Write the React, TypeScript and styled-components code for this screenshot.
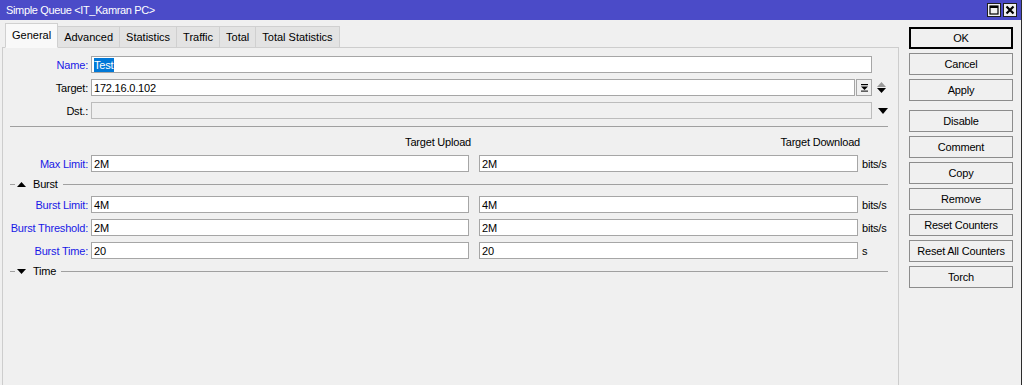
import React from 'react';
import styled, { createGlobalStyle } from 'styled-components';

const GlobalStyle = createGlobalStyle`
  html, body {
    margin: 0;
    padding: 0;
  }
  body {
    font-family: 'Liberation Sans', Arial, sans-serif;
    font-size: 11px;
    letter-spacing: -0.2px;
    color: #000;
    background: #fdfdfd;
  }
`;

const BLUE = '#1818e6';

const Screen = styled.div`
  display: flex;
  width: 1024px;
  height: 385px;
  overflow: hidden;
  background: #fdfdfd;
`;

const Window = styled.div`
  display: flex;
  flex-direction: column;
  width: 1021px;
  height: 100%;
  flex-shrink: 0;
  background: #f0f0f0;
  border-right: 1px solid #2b2b2b;
`;

const TitleBar = styled.div`
  display: flex;
  align-items: center;
  justify-content: space-between;
  height: 20px;
  padding: 0 4px 0 6px;
  background: #4b4bc8;
  color: #fff;
  font-size: 11px;
  letter-spacing: -0.35px;
`;

const TitleButtons = styled.div`
  display: flex;
  gap: 2px;
`;

const TitleBtn = styled.div`
  display: flex;
  align-items: center;
  justify-content: center;
  box-sizing: border-box;
  width: 14px;
  height: 14px;
  border: 1px solid #1e1e1e;
  background: #f0f0f0;
`;

const Body = styled.div`
  display: flex;
  flex: 1;
  min-height: 0;
`;

const Main = styled.div`
  display: flex;
  flex-direction: column;
  width: 899px;
  box-sizing: border-box;
  padding: 3px 0 0 2px;
`;

const Tabs = styled.div`
  display: flex;
  align-items: flex-end;
  padding-left: 3px;
  margin-bottom: -1px;
`;

const Tab = styled.div<{ $active?: boolean }>`
  position: relative;
  z-index: ${(p) => (p.$active ? 1 : 0)};
  display: flex;
  align-items: center;
  justify-content: center;
  box-sizing: border-box;
  height: ${(p) => (p.$active ? 25 : 22)}px;
  padding: ${(p) => (p.$active ? '0 6px 2px' : '0 6px')};
  margin-right: -1px;
  letter-spacing: 0;
  background: ${(p) => (p.$active ? '#f9f9f9' : '#e3e3e3')};
  border: 1px solid #d0d0d0;
  border-bottom: ${(p) => (p.$active ? '1px solid #f9f9f9' : '1px solid #d0d0d0')};
`;

const Panel = styled.div`
  flex: 1;
  border: 1px solid #cdcdcd;
  border-bottom: none;
  background: #f0f0f0;
`;

const Form = styled.div`
  display: flex;
  flex-direction: column;
  padding: 8px 0 0 0;
`;

const Row = styled.div`
  display: flex;
  align-items: center;
  height: 17px;
  margin-bottom: 6px;
`;

const Label = styled.div<{ $blue?: boolean }>`
  width: 85px;
  margin-right: 3px;
  text-align: right;
  white-space: nowrap;
  color: ${(p) => (p.$blue ? BLUE : '#000')};
`;

const Field = styled.div<{ $w: number; $disabled?: boolean }>`
  display: flex;
  align-items: center;
  box-sizing: border-box;
  width: ${(p) => p.$w}px;
  height: 17px;
  padding: 0 2px;
  border: 1px solid ${(p) => (p.$disabled ? '#bcbcbc' : '#a6a6a6')};
  background: ${(p) => (p.$disabled ? '#f0f0f0' : '#fff')};
  white-space: nowrap;
  overflow: hidden;
`;

const Selected = styled.span`
  background: #0078d7;
  color: #fff;
  padding: 1px 1px 1px 0;
`;

const Tail = styled.div<{ $w?: number; $ml?: number }>`
  display: flex;
  align-items: center;
  justify-content: flex-end;
  width: ${(p) => p.$w ?? 16}px;
  margin-left: ${(p) => p.$ml ?? 0}px;
`;

const DropBtn = styled.div`
  display: flex;
  align-items: center;
  justify-content: center;
  box-sizing: border-box;
  width: 16px;
  height: 17px;
  margin-left: 1px;
  border: 1px solid #a6a6a6;
  background: #f0f0f0;
`;

const Spinner = styled.div`
  display: flex;
  flex-direction: column;
  gap: 1px;
  margin-left: 5px;
`;

const Separator = styled.div`
  width: 878px;
  height: 1px;
  margin: 1px 0 0 7px;
  background: #a0a0a0;
`;

const HeaderRow = styled.div`
  display: flex;
  align-items: flex-end;
  height: 22px;
  margin-bottom: 6px;
`;

const HeadCell = styled.div<{ $w: number; $ml?: number }>`
  width: ${(p) => p.$w}px;
  margin-left: ${(p) => p.$ml ?? 0}px;
  text-align: right;
  line-height: 13px;
`;

const Unit = styled.div`
  width: 26px;
  margin-left: 4px;
  white-space: nowrap;
`;

const GroupHead = styled.div`
  display: flex;
  align-items: center;
  width: 878px;
  height: 12px;
  margin: 0 0 6px 7px;
`;

const Dash = styled.div<{ $grow?: boolean }>`
  height: 1px;
  background: #a0a0a0;
  width: 5px;
  flex: ${(p) => (p.$grow ? 1 : 'none')};
`;

const Arrow = styled.span`
  display: flex;
  margin-left: 2px;
`;

const GroupTitle = styled.div`
  margin: 0 5px 0 7px;
`;

const Side = styled.div`
  display: flex;
  flex-direction: column;
  gap: 4px;
  padding: 7px 0 0 10px;
`;

const Button = styled.div<{ $default?: boolean; $gapTop?: boolean }>`
  display: flex;
  align-items: center;
  justify-content: center;
  box-sizing: border-box;
  width: 104px;
  height: 22px;
  margin-top: ${(p) => (p.$gapTop ? 5 : 0)}px;
  border: 1px solid ${(p) => (p.$default ? '#000' : '#8c8c8c')};
  box-shadow: ${(p) => (p.$default ? 'inset 0 0 0 1px #000' : 'none')};
  background: #f0f0f0;
`;

const Edge = styled.div`
  flex: 1;
  background: #fdfdfd;
`;

const Triangle = ({ up, color = '#000' }: { up?: boolean; color?: string }) => (
  <svg width="9" height="5" viewBox="0 0 9 5">
    <polygon points={up ? '0,5 9,5 4.5,0' : '0,0 9,0 4.5,5'} fill={color} />
  </svg>
);

const tabs = ['General', 'Advanced', 'Statistics', 'Traffic', 'Total', 'Total Statistics'];

const buttons = [
  'OK',
  'Cancel',
  'Apply',
  'Disable',
  'Comment',
  'Copy',
  'Remove',
  'Reset Counters',
  'Reset All Counters',
  'Torch',
];

const burstRows = [
  { label: 'Burst Limit:', up: '4M', down: '4M', unit: 'bits/s' },
  { label: 'Burst Threshold:', up: '2M', down: '2M', unit: 'bits/s' },
  { label: 'Burst Time:', up: '20', down: '20', unit: 's' },
];

const LimitRow = ({ label, up, down, unit }: { label: string; up: string; down: string; unit: string }) => (
  <Row>
    <Label $blue>{label}</Label>
    <Field $w={378}>{up}</Field>
    <Field $w={379} style={{ marginLeft: 10 }}>
      {down}
    </Field>
    <Unit>{unit}</Unit>
  </Row>
);

const Group = ({ title, open }: { title: string; open?: boolean }) => (
  <GroupHead>
    <Dash />
    <Arrow>
      <Triangle up={open} />
    </Arrow>
    <GroupTitle>{title}</GroupTitle>
    <Dash $grow />
  </GroupHead>
);

const App = () => {
  return (
    <Screen>
      <GlobalStyle />
      <Window>
        <TitleBar>
          <span>Simple Queue &lt;IT_Kamran PC&gt;</span>
          <TitleButtons>
            <TitleBtn>
              <svg width="10" height="10" viewBox="0 0 10 10">
                <rect x="1" y="1" width="8" height="8" fill="none" stroke="#000" strokeWidth="1.2" />
                <rect x="1" y="1" width="8" height="2" fill="#000" />
              </svg>
            </TitleBtn>
            <TitleBtn>
              <svg width="10" height="10" viewBox="0 0 10 10">
                <path d="M1.5 1.5 L8.5 8.5 M8.5 1.5 L1.5 8.5" stroke="#000" strokeWidth="2.2" />
              </svg>
            </TitleBtn>
          </TitleButtons>
        </TitleBar>
        <Body>
          <Main>
            <Tabs>
              {tabs.map((t, i) => (
                <Tab key={t} $active={i === 0}>
                  {t}
                </Tab>
              ))}
            </Tabs>
            <Panel>
              <Form>
                <Row>
                  <Label $blue>Name:</Label>
                  <Field $w={781}>
                    <Selected>Test</Selected>
                  </Field>
                  <Tail />
                </Row>
                <Row>
                  <Label>Target:</Label>
                  <Field $w={764}>172.16.0.102</Field>
                  <DropBtn>
                    <svg width="9" height="9" viewBox="0 0 9 9">
                      <rect x="1" y="1" width="7" height="1.2" fill="#000" />
                      <polygon points="1,3.5 8,3.5 4.5,7" fill="#000" />
                      <rect x="1" y="7.6" width="7" height="1" fill="#000" />
                    </svg>
                  </DropBtn>
                  <Spinner>
                    <Triangle up color="#9a9a9a" />
                    <Triangle />
                  </Spinner>
                </Row>
                <Row>
                  <Label>Dst.:</Label>
                  <Field $w={781} $disabled />
                  <Tail>
                    <svg width="10" height="6" viewBox="0 0 10 6">
                      <polygon points="0,0 10,0 5,6" fill="#000" />
                    </svg>
                  </Tail>
                </Row>
                <Separator />
                <HeaderRow>
                  <HeadCell $w={380} $ml={88}>
                    Target Upload
                  </HeadCell>
                  <HeadCell $w={381} $ml={8}>
                    Target Download
                  </HeadCell>
                </HeaderRow>
                <LimitRow label="Max Limit:" up="2M" down="2M" unit="bits/s" />
                <Group title="Burst" open />
                {burstRows.map((r) => (
                  <LimitRow key={r.label} {...r} />
                ))}
                <Group title="Time" />
              </Form>
            </Panel>
          </Main>
          <Side>
            {buttons.map((b, i) => (
              <Button key={b} $default={i === 0} $gapTop={b === 'Disable'}>
                {b}
              </Button>
            ))}
          </Side>
        </Body>
      </Window>
      <Edge />
    </Screen>
  );
};

export default App;
